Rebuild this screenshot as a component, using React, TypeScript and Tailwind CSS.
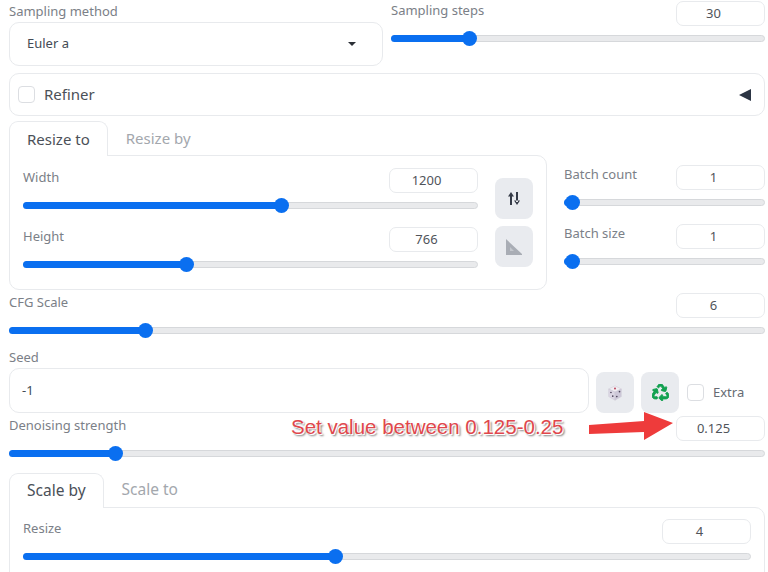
import { FaRecycle } from "react-icons/fa";

const FONT = "font-['Noto_Sans',sans-serif]";

function NumberBox({ value, className = "w-[89px]" }: { value: string; className?: string }) {
  return (
    <div className={`flex h-[25px] items-center justify-center rounded-[7px] border border-[#e8eaed] bg-white pr-[14px] text-[13px] text-[#50545a] ${className}`}>
      {value}
    </div>
  );
}

function Slider({ percent }: { percent: number }) {
  return (
    <div className="relative h-[7px] w-full rounded-full border border-[#d6d8db] bg-[#e9eaec]">
      <div className="absolute -left-px -top-px h-[7px] rounded-full bg-[#0a6ff0]" style={{ width: `${percent}%` }} />
      <div
        className="absolute top-[-5px] -ml-2 size-[15px] rounded-full bg-[#0a6ff0]"
        style={{ left: `${percent}%` }}
      />
    </div>
  );
}

function SliderField({ label, value, percent }: { label: string; value: string; percent: number }) {
  return (
    <div>
      <div className="flex h-[25px] items-center justify-between">
        <span className="mb-[5px] text-[13px] text-[#7b8087]">{label}</span>
        <NumberBox value={value} />
      </div>
      <div className="mt-[9px] flex h-[7px] items-center">
        <Slider percent={percent} />
      </div>
    </div>
  );
}

function Tabs({ active, other, textClass = "text-[15px]" }: { active: string; other: string; textClass?: string }) {
  return (
    <div className={`flex h-[34px] ${textClass}`}>
      <div className="relative z-10 flex h-[35px] items-center rounded-t-[9px] border border-b-0 border-[#e8eaed] bg-white px-[17px] text-[#4b5058]">
        {active}
      </div>
      <div className="flex items-center px-[18px] text-[#a3a7ad]">{other}</div>
    </div>
  );
}

function IconButton({ children }: { children: React.ReactNode }) {
  return (
    <div className="flex h-[41px] w-[38px] items-center justify-center rounded-[8px] bg-[#e9ebef]">{children}</div>
  );
}

function Checkbox() {
  return <div className="size-[17px] rounded-[4px] border border-[#dcdee2] bg-white" />;
}

export default function App() {
  return (
    <div className={`relative h-[572px] w-[768px] overflow-hidden bg-white ${FONT}`}>
      <div className="pl-[9px] pr-[3px] pt-[1px]">
        <div className="flex gap-2">
          <div className="w-[374px]">
            <div className="mt-[1px] text-[13px] leading-[18px] text-[#7b8087]">Sampling method</div>
            <div className="mt-[2px] flex h-[44px] items-center justify-between rounded-[10px] border border-[#e8eaed] pl-[17px] pr-[26px] text-[13px] text-[#444b55]">
              Euler a
              <div className="h-0 w-0 border-x-[4px] border-t-[4px] border-x-transparent border-t-[#2b2f36]" />
            </div>
          </div>
          <div className="w-[374px]">
            <SliderField label="Sampling steps" value="30" percent={21} />
          </div>
        </div>

        <div className="mt-[7px] flex h-[43px] items-center justify-between rounded-[10px] border border-[#e8eaed] pl-[8px] pr-[13px]">
          <div className="flex items-center gap-[9px]">
            <Checkbox />
            <span className="text-[15px] text-[#4b5058]">Refiner</span>
          </div>
          <div className="h-0 w-0 border-y-[6px] border-r-[12px] border-y-transparent border-r-[#2c3544]" />
        </div>

        <div className="mt-[5px] flex">
          <div className="w-[538px]">
            <Tabs active="Resize to" other="Resize by" />
            <div className="flex h-[135px] gap-[17px] rounded-b-[10px] rounded-tr-[10px] border border-[#e8eaed] pl-[13px] pr-[13px] pt-[12px]">
              <div className="flex w-[456px] flex-col gap-[18px]">
                <SliderField label="Width" value="1200" percent={57} />
                <SliderField label="Height" value="766" percent={36} />
              </div>
              <div className="mt-[10px] flex flex-col gap-[7px]">
                <IconButton>
                  <svg viewBox="0 0 12 13" className="h-[13px] w-[12px]" fill="#353b47">
                    <path d="M2 3h2v10H2zM0 4.5L3 0l3 4.5zM8 0h2v10H8zM6 8.5L9 13l3-4.5z" />
                  </svg>
                </IconButton>
                <IconButton>
                  <svg viewBox="0 0 18 18" className="size-[18px]">
                    <path fill="#a9adb5" d="M1 1l16 15v1H1z" />
                    <path fill="#c4c7cd" d="M5 9v4h4z" />
                  </svg>
                </IconButton>
              </div>
            </div>
          </div>
          <div className="ml-[17px] flex w-[201px] flex-col gap-[18px] pt-[44px]">
            <SliderField label="Batch count" value="1" percent={4} />
            <SliderField label="Batch size" value="1" percent={4} />
          </div>
        </div>

        <div className="mt-[3px]">
          <SliderField label="CFG Scale" value="6" percent={18} />
        </div>

        <div className="mt-[14px] text-[13px] leading-[18px] text-[#7b8087]">Seed</div>
        <div className="mt-[2px] flex items-end">
          <div className="flex h-[45px] w-[580px] items-center rounded-[10px] border border-[#e8eaed] pl-[12px] text-[13px] text-[#444b55]">
            -1
          </div>
          <div className="ml-[7px] flex gap-[7px]">
            <IconButton>
              <svg viewBox="0 0 20 20" className="size-[18px]">
                <path d="M10 2l7 3.5-7 3.5-7-3.5z" fill="#f1eef2" stroke="#c9c4d2" strokeWidth="0.5" />
                <path d="M3 5.5L10 9v9l-7-4z" fill="#dcd7e4" stroke="#c9c4d2" strokeWidth="0.5" />
                <path d="M17 5.5L10 9v9l7-4z" fill="#cdc8d8" stroke="#c9c4d2" strokeWidth="0.5" />
                <circle cx="10" cy="5" r="1" fill="#b5364f" />
                <circle cx="5.5" cy="9.5" r="0.9" fill="#4a4358" />
                <circle cx="7.5" cy="13.5" r="0.9" fill="#4a4358" />
                <circle cx="15" cy="8.5" r="0.9" fill="#4a4358" />
                <circle cx="12" cy="14" r="0.9" fill="#4a4358" />
              </svg>
            </IconButton>
            <IconButton>
              <FaRecycle className="size-[17px] text-[#12a150]" stroke="currentColor" strokeWidth={30} />
            </IconButton>
          </div>
          <div className="ml-[8px] flex h-[41px] items-center gap-[9px]">
            <Checkbox />
            <span className="text-[13px] text-[#666b73]">Extra</span>
          </div>
        </div>

        <div className="mt-[3px]">
          <SliderField label="Denoising strength" value="0.125" percent={14} />
        </div>

        <div className="mt-[16px]">
          <Tabs active="Scale by" other="Scale to" textClass="text-[15.5px]" />
          <div className="h-[80px] rounded-tr-[10px] border border-[#e8eaed] pl-[13px] pr-[13px] pt-[11px]">
            <SliderField label="Resize" value="4" percent={43} />
          </div>
        </div>
      </div>

      {/* annotation drawn over the form */}
      <div className="absolute left-[291px] top-[413px] font-['Liberation_Sans',sans-serif] text-[20.5px] leading-[28px] text-[#e0474c] [text-shadow:1px_1px_0_#fff,-1px_-1px_0_#fff,2px_2px_2px_#777]">
        Set value between 0.125-0.25
      </div>
      <svg viewBox="0 0 90 32" className="absolute left-[588px] top-[410px] h-[32px] w-[90px]">
        <path d="M1 15L56 11V2L85 13 56 30V22L1 24z" fill="#ee3b3b" />
      </svg>
    </div>
  );
}
